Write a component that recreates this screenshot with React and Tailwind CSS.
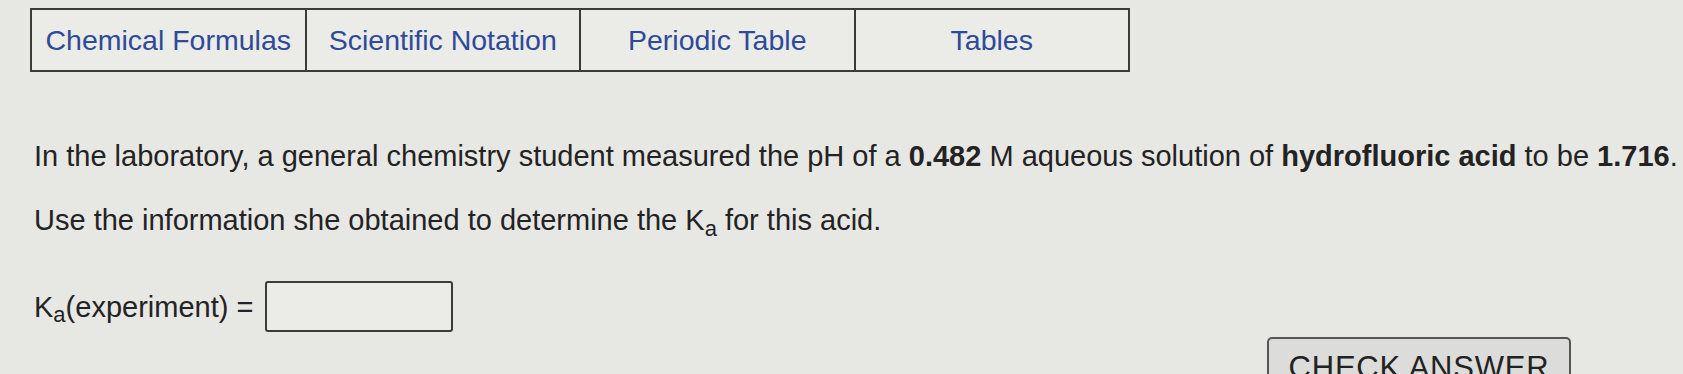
const tabs = ["Chemical Formulas", "Scientific Notation", "Periodic Table", "Tables"];

export default function App() {
  return (
    <div
      className="h-[374px] w-[1683px] overflow-hidden bg-[#e7e7e4] text-[#232323]"
      style={{ fontFamily: '"Liberation Sans", Arial, sans-serif' }}
    >
      <div className="pl-[30px] pt-[8px]">
        <div className="flex w-[1100px] border-2 border-[#3a3a3a] bg-[#ebebe8]">
          {tabs.map((t, i) => (
            <div
              key={t}
              className={`flex h-[60px] flex-1 items-center justify-center text-[28.5px] text-[#2e4a98] ${
                i > 0 ? "border-l-2 border-[#3a3a3a]" : ""
              }`}
            >
              {t}
            </div>
          ))}
        </div>
      </div>

      <div className="pl-[34px] pt-[67px] text-[29px] leading-[34px]">
        <p>
          In the laboratory, a general chemistry student measured the pH of a{" "}
          <b>0.482</b> M aqueous solution of <b>hydrofluoric acid</b> to be <b>1.716</b>.
        </p>
        <p className="mt-[30px]">
          Use the information she obtained to determine the K
          <sub className="text-[22px]">a</sub> for this acid.
        </p>
        <div className="mt-[44px] flex items-center gap-[12px]">
          <span>
            K<sub className="text-[22px]">a</sub>(experiment) =
          </span>
          <div className="h-[51px] w-[188px] rounded-[3px] border-2 border-[#3a3a3a] bg-[#ebebe8]" />
        </div>
      </div>

      <div className="flex justify-end pr-[112px] pt-[5px]">
        <button className="h-[50px] w-[304px] rounded-t-[5px] border-2 border-[#555] bg-[#dcdcda] pt-[10px] text-[31px] leading-none tracking-wide text-[#222]">
          CHECK ANSWER
        </button>
      </div>
    </div>
  );
}
